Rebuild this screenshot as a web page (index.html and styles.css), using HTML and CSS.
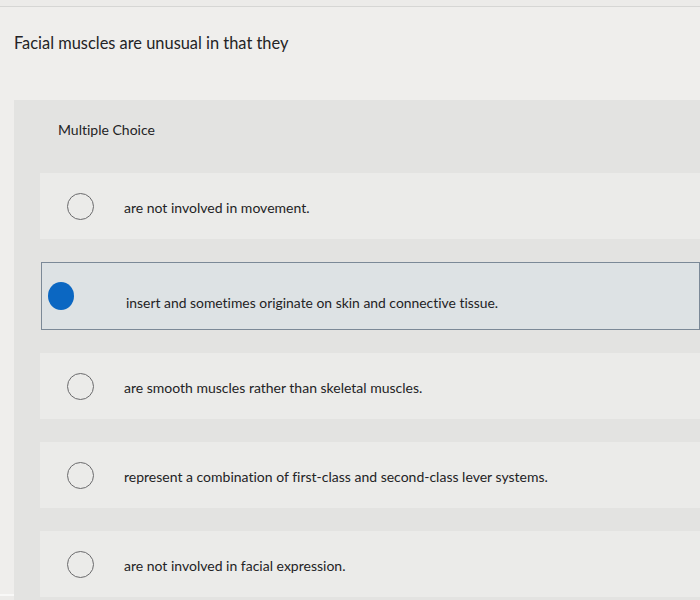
FILE: index.html
```html
<!DOCTYPE html>
<html lang="en">
<head>
<meta charset="utf-8">
<title>Multiple Choice</title>
<link rel="stylesheet" href="styles.css">
</head>
<body>
<div class="page">
  <div class="question">Facial muscles are unusual in that they</div>
  <div class="panel">
    <div class="label">Multiple Choice</div>
    <div class="options">
      <div class="option"><span class="radio"></span><span class="text">are not involved in movement.</span></div>
      <div class="option selected"><span class="radio"></span><span class="text">insert and sometimes originate on skin and connective tissue.</span></div>
      <div class="option"><span class="radio"></span><span class="text">are smooth muscles rather than skeletal muscles.</span></div>
      <div class="option"><span class="radio"></span><span class="text">represent a combination of first-class and second-class lever systems.</span></div>
      <div class="option"><span class="radio"></span><span class="text">are not involved in facial expression.</span></div>
    </div>
  </div>
</div>
</body>
</html>
```
FILE: styles.css
```css
html, body {
  margin: 0;
  padding: 0;
  background: #ecebe9;
}
body {
  font-family: "Lato", "Open Sans", "Liberation Sans", sans-serif;
  font-variant-ligatures: none;
  color: #232325;
  width: 700px;
  height: 600px;
  overflow: hidden;
}
.page {
  margin-top: 6px;
  border-top: 1px solid #d6d6d4;
  background: #efeeec;
  height: 587px;
  border-bottom: 2px solid #f8f8f7;
}
.question {
  padding: 26px 0 0 14px;
  height: 67px;
  font-size: 16.4px;
  line-height: 20px;
}
.panel {
  margin-left: 14px;
  background: #e3e3e1;
  padding-bottom: 6px;
}
.label {
  padding: 22px 0 0 44px;
  height: 51px;
  font-size: 14px;
  line-height: 16px;
}
.options {
  display: flex;
  flex-direction: column;
  gap: 23px;
  padding-left: 26px;
}
.option {
  height: 66px;
  background: #ebebe9;
  display: flex;
  align-items: center;
  position: relative;
}
.radio {
  width: 25px;
  height: 25px;
  border: 1.5px solid #6a6a6c;
  border-radius: 50%;
  margin-left: 27px;
  flex: none;
}
.text {
  margin-left: 30px;
  font-size: 14px;
  padding-top: 3px;
}
.option.selected {
  background: #dde2e4;
  border: 1.5px solid #7b8997;
  margin-left: 1px;
}
.option.selected .radio {
  width: 26px;
  height: 28px;
  border: none;
  background: #0b67c2;
  margin-left: 6px;
}
.option.selected .text {
  margin-left: 52px;
  padding-top: 12px;
  font-size: 13.9px;
}
```
